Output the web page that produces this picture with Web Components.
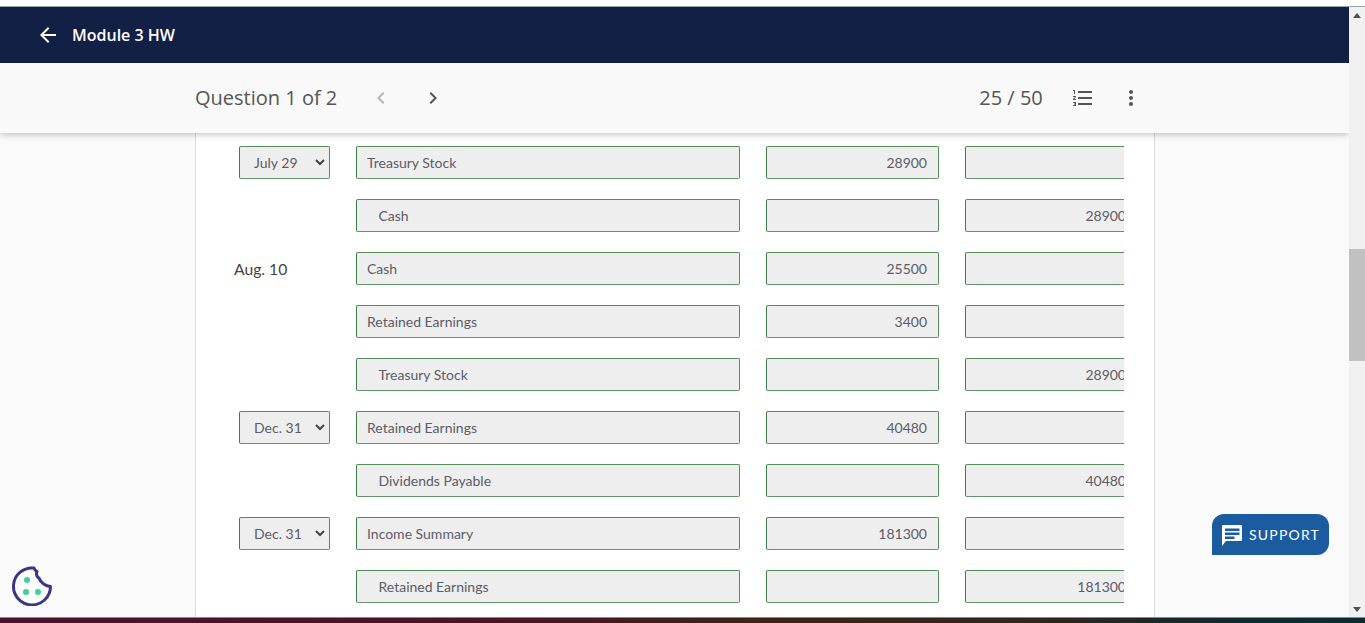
<!DOCTYPE html>
<html lang="en">
<head>
<meta charset="utf-8">
<title>Module 3 HW</title>
<style>
  html, body { margin: 0; height: 100%; overflow: hidden; background: #fff; }
  body { font-family: "Lato", "Liberation Sans", sans-serif; }
</style>
</head>
<body>
<hw-app>
  <hw-header slot="header" title="Module 3 HW"></hw-header>
  <hw-toolbar slot="toolbar" question="Question 1 of 2" score="25 / 50"></hw-toolbar>
  <hw-row date="July 29" account="Treasury Stock" debit="28900"></hw-row>
  <hw-row account="Cash" credit="28900" indent></hw-row>
  <hw-row label="Aug. 10" account="Cash" debit="25500"></hw-row>
  <hw-row account="Retained Earnings" debit="3400"></hw-row>
  <hw-row account="Treasury Stock" credit="28900" indent></hw-row>
  <hw-row date="Dec. 31" account="Retained Earnings" debit="40480"></hw-row>
  <hw-row account="Dividends Payable" credit="40480" indent></hw-row>
  <hw-row date="Dec. 31" account="Income Summary" debit="181300"></hw-row>
  <hw-row account="Retained Earnings" credit="181300" indent></hw-row>
  <hw-support slot="float"></hw-support>
  <hw-cookie slot="float"></hw-cookie>
</hw-app>

<script>
// small helper, every element just sets its shadow html once
function shadow(el, html) {
  el.attachShadow({ mode: "open" }).innerHTML = html;
}

class HwApp extends HTMLElement {
  constructor() {
    super();
    shadow(this, `
      <style>
        :host { display: flex; flex-direction: column; height: 623px; }
        .top { height: 6px; background: #fff; border-bottom: 1px solid #9a9fae; flex: none; }
        .window { flex: 1; display: flex; min-height: 0; position: relative; }
        .main { flex: 1; display: flex; flex-direction: column; min-width: 0; overflow: hidden; background: #fafafa; }
        .content { flex: 1; min-height: 0; overflow: hidden; }
        .card {
          width: 960px; height: 100%; margin-left: 195px; padding-top: 13px; box-sizing: border-box;
          background: #fff; border: solid #dcdcdc; border-width: 0 1px;
        }
        .table { margin-left: 30px; width: 898px; overflow: hidden; display: flex; flex-direction: column; gap: 20px; }
        .strip {
          height: 6px; flex: none; border-top: 1px solid #8a8a8a; box-sizing: border-box;
          background: linear-gradient(90deg, #4b1230 0%, #4a1426 35%, #3c2416 55%, #33261a 75%, #10292f 90%, #0e2a30 100%);
        }
      </style>
      <div class="top"></div>
      <div class="window">
        <div class="main">
          <slot name="header"></slot>
          <slot name="toolbar"></slot>
          <div class="content">
            <div class="card"><div class="table"><slot></slot></div></div>
          </div>
        </div>
        <hw-scrollbar></hw-scrollbar>
        <slot name="float"></slot>
      </div>
      <div class="strip"></div>
    `);
  }
}

class HwHeader extends HTMLElement {
  connectedCallback() {
    if (this.shadowRoot) return;
    shadow(this, `
      <style>
        :host { display: flex; align-items: center; height: 56px; flex: none; background: #132046; color: #fff; padding-left: 36px; gap: 12px; }
        svg { width: 24px; height: 24px; fill: #fff; display: block; }
        span { font: 600 16px "Open Sans", sans-serif; padding-bottom: 1px; }
      </style>
      <svg viewBox="0 0 24 24"><path d="M20 11H7.83l5.59-5.59L12 4l-8 8 8 8 1.41-1.41L7.83 13H20v-2z"/></svg>
      <span>${this.getAttribute("title")}</span>
    `);
  }
}

class HwToolbar extends HTMLElement {
  connectedCallback() {
    if (this.shadowRoot) return;
    shadow(this, `
      <style>
        :host {
          display: flex; align-items: center; height: 70px; flex: none; box-sizing: border-box;
          background: #f9f9f9; padding-left: 195px; position: relative; z-index: 1;
          box-shadow: 0 2px 6px rgba(0,0,0,.22); color: #555; font: 400 20px "Open Sans", sans-serif;
        }
        span { padding-bottom: 1px; }
        svg { width: 24px; height: 24px; fill: #555; display: block; flex: none; }
        .prev { margin-left: 32px; fill: #b5b5b5; }
        .next { margin-left: 28px; }
        .score { margin-left: 534px; }
        .list { margin-left: 28px; }
        .more { margin-left: 24px; }
      </style>
      <span>${this.getAttribute("question")}</span>
      <svg class="prev" viewBox="0 0 24 24"><path d="M15.41 7.41L14 6l-6 6 6 6 1.41-1.41L10.83 12z"/></svg>
      <svg class="next" viewBox="0 0 24 24"><path d="M10 6L8.59 7.41 13.17 12l-4.58 4.59L10 18l6-6z"/></svg>
      <span class="score">${this.getAttribute("score")}</span>
      <svg class="list" viewBox="0 0 24 24"><path d="M2 17h2v.5H3v1h1v.5H2v1h3v-4H2zm1-9h1V4H2v1h1v3zm-1 3h1.8L2 13.1v.9h3v-1H3.2L5 10.9V10H2v1zm5-6v2h14V5H7zm0 14h14v-2H7v2zm0-6h14v-2H7v2z"/></svg>
      <svg class="more" viewBox="0 0 24 24"><path d="M12 8c1.1 0 2-.9 2-2s-.9-2-2-2-2 .9-2 2 .9 2 2 2zm0 2c-1.1 0-2 .9-2 2s.9 2 2 2 2-.9 2-2-.9-2-2-2zm0 6c-1.1 0-2 .9-2 2s.9 2 2 2 2-.9 2-2-.9-2-2-2z"/></svg>
    `);
  }
}

class HwField extends HTMLElement {
  constructor() {
    super();
    shadow(this, `
      <style>
        :host {
          display: flex; align-items: center; height: 33px; box-sizing: border-box; padding: 0 11px 0 10px;
          background: #eee; border: 1px solid; border-color: #568c5c #568c5c #649569 #3f7d46; border-radius: 2px;
          color: #5c5c66; font: 400 14px "Lato", sans-serif; white-space: nowrap; overflow: hidden;
        }
        :host([indent]) { padding-left: 21.5px; }
        :host([num]) { justify-content: flex-end; }
      </style>
      <slot></slot>
    `);
  }
}

class HwDate extends HTMLElement {
  constructor() {
    super();
    shadow(this, `
      <style>
        :host {
          display: flex; align-items: center; width: 91px; height: 33px; box-sizing: border-box; padding: 0 4px 0 14px;
          background: #eee; border: 1px solid; border-color: #568c5c #568c5c #649569 #3f7d46; border-radius: 2px;
          color: #5c5c66; font: 400 14px "Lato", sans-serif; white-space: nowrap;
        }
        svg { width: 10px; height: 7px; margin-left: auto; fill: none; stroke: #444; stroke-width: 2; display: block; }
      </style>
      <slot></slot>
      <svg viewBox="0 0 10 7"><path d="M1 1l4 4 4-4"/></svg>
    `);
  }
}

class HwRow extends HTMLElement {
  connectedCallback() {
    if (this.shadowRoot) return;
    const date = this.getAttribute("date");
    const label = this.getAttribute("label");
    const indent = this.hasAttribute("indent") ? "indent" : "";
    let first = "";
    if (date) first = `<hw-date>${date}</hw-date>`;
    if (label) first = `<span class="label">${label}</span>`;
    shadow(this, `
      <style>
        :host { display: grid; grid-template-columns: 104px 384px 173px 173px; column-gap: 26px; align-items: center; height: 33px; }
        .when { display: flex; justify-content: flex-end; }
        .label { margin-right: auto; padding-left: 8px; font: 400 15.7px "Lato", sans-serif; color: #444; }
      </style>
      <div class="when">${first}</div>
      <hw-field ${indent}>${this.getAttribute("account")}</hw-field>
      <hw-field num>${this.getAttribute("debit") || ""}</hw-field>
      <hw-field num>${this.getAttribute("credit") || ""}</hw-field>
    `);
  }
}

class HwScrollbar extends HTMLElement {
  constructor() {
    super();
    shadow(this, `
      <style>
        :host { display: flex; flex-direction: column; width: 16px; flex: none; background: #f1f1f1; position: relative; z-index: 2; }
        .thumb { width: 16px; height: 112px; margin-top: 226px; background: #c1c1c1; }
        svg { width: 16px; height: 16px; display: block; fill: #505050; flex: none; }
        .down { margin-top: auto; }
      </style>
      <svg viewBox="0 0 16 16"><path d="M4 11h8L8 6z"/></svg>
      <div class="thumb"></div>
      <svg class="down" viewBox="0 0 16 16"><path d="M4 6h8l-4 5z"/></svg>
    `);
  }
}

class HwSupport extends HTMLElement {
  constructor() {
    super();
    shadow(this, `
      <style>
        :host {
          position: absolute; left: 1212px; top: 507px; width: 117px; height: 41px; box-sizing: border-box;
          display: flex; align-items: center; gap: 5px; padding-left: 8px;
          background: #1b5ca0; color: #fff; border-radius: 12px 12px 12px 0; z-index: 3;
          font: 400 14px "Lato", sans-serif; letter-spacing: 1.2px;
        }
        svg { width: 24px; height: 24px; display: block; flex: none; }
        span { padding-bottom: 1px; }
      </style>
      <svg viewBox="0 0 24 24"><path fill="#fff" fill-rule="evenodd" d="M3 2h18a1 1 0 0 1 1 1v14a1 1 0 0 1-1 1H6l-4 5V3a1 1 0 0 1 1-1zM5 5.5v2.5h14.5V5.5zM5 9.5V12h14.5V9.5zM5 13.5V16h9.5v-2.5z"/></svg>
      <span>SUPPORT</span>
    `);
  }
}

class HwCookie extends HTMLElement {
  constructor() {
    super();
    shadow(this, `
      <style>
        :host { position: absolute; left: 12px; top: 558px; width: 40px; height: 41px; z-index: 3; }
        svg { width: 40px; height: 41px; display: block; }
      </style>
      <svg viewBox="0 0 40 41">
        <path d="M22 3A18.5 18.5 0 1 0 38.5 21.5C34 21 28.5 18 27 13C24.5 12.5 24 8 25 6.5C23.5 6 22.5 4.5 22 3Z" fill="#fff" stroke="#3b3585" stroke-width="3" stroke-linejoin="round"/>
        <circle cx="15" cy="15" r="3" fill="#3fd19a"/>
        <circle cx="14" cy="27" r="3" fill="#3fd19a"/>
        <circle cx="26" cy="27" r="3" fill="#3fd19a"/>
      </svg>
    `);
  }
}

customElements.define("hw-app", HwApp);
customElements.define("hw-header", HwHeader);
customElements.define("hw-toolbar", HwToolbar);
customElements.define("hw-field", HwField);
customElements.define("hw-date", HwDate);
customElements.define("hw-row", HwRow);
customElements.define("hw-scrollbar", HwScrollbar);
customElements.define("hw-support", HwSupport);
customElements.define("hw-cookie", HwCookie);
</script>
</body>
</html>
